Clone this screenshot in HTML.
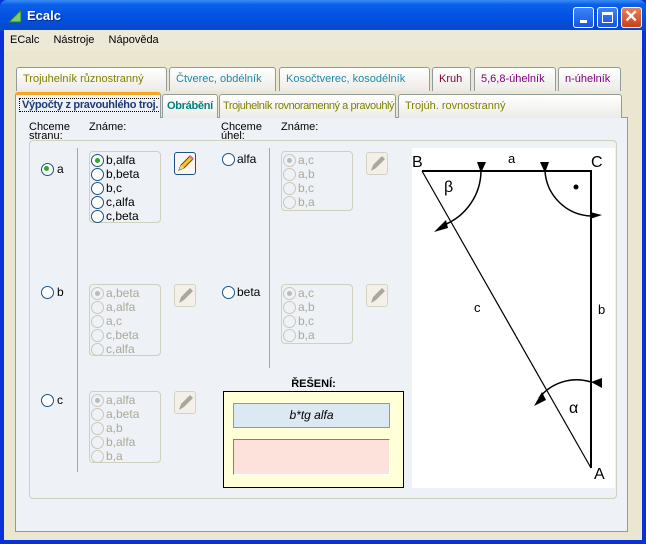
<!DOCTYPE html>
<html><head><meta charset="utf-8"><style>
*{box-sizing:border-box;margin:0;padding:0}
body{width:646px;height:544px;overflow:hidden;background:#0831d9;font-family:"Liberation Sans",sans-serif;font-size:11px;position:relative}
.abs{position:absolute}
#title{left:0;top:0;width:646px;height:31px;background:linear-gradient(#3a8cf5 0%,#0a5fe8 15%,#0050e0 60%,#0648c8 100%);border-radius:7px 7px 0 0}
#frame{left:4px;top:30px;width:638px;height:510px;background:#ece9d8}
#body{left:4px;top:50px;width:638px;height:490px;background:#ebe6d0}
.tb{top:7px;width:21px;height:21px;border:1px solid #fff;border-radius:3px;background:linear-gradient(#3c84f6,#1655e0)}
.tab{height:24px;border:1px solid #919b9c;border-bottom:none;border-radius:3px 3px 0 0;background:linear-gradient(#fff,#ecebe6);font-size:11px;line-height:22px;padding-left:6px;white-space:nowrap;overflow:hidden}
#panel{left:15px;top:117px;width:613px;height:415px;background:#eef2f6;border:1px solid #919b9c}
.gb{border:1px solid #d0d0bf;border-radius:4px}
.lb{border:1px solid #d0d0bf;border-radius:4px;background:transparent}
.opt{height:14px;line-height:14px;font-size:12px;padding-left:16px;position:relative}
.opt:before{content:"";position:absolute;left:1px;top:1px;width:11px;height:11px;border:1px solid #1c5180;border-radius:50%;background:#fff}
.dis{color:#aca899}.dis .opt:before{border-color:#cac8bb;background:transparent}
.sel:after{content:"";position:absolute;left:5px;top:5px;width:5px;height:5px;border-radius:50%;background:#2aaa2a}
.dis .sel:after{background:#bbb}
.rad{font-size:12px;padding-left:16px;position:absolute;height:14px;line-height:13px}
.rad:before{content:"";position:absolute;left:0;top:0;width:11px;height:11px;border:1px solid #1c5180;border-radius:50%;background:#fff}
.pb{width:22px;height:23px;border:1px solid #d6d2c2;border-radius:3px;background:#f2f0e8}
.lbl{font-size:11px;line-height:9px;color:#000}
</style></head><body>
<div id="title" class="abs"></div>
<svg class="abs" style="left:8px;top:9px" width="14" height="14"><polygon points="1,13 13,1 13,13" fill="#7ccf6a" stroke="#2a7a2a"/></svg>
<div class="abs" style="left:27px;top:8px;color:#fff;font-weight:bold;font-size:13px;text-shadow:1px 1px #0a2a8a">Ecalc</div>
<div class="abs tb" style="left:573px"><div class="abs" style="left:6px;top:12px;width:7px;height:3px;background:#fff"></div></div>
<div class="abs tb" style="left:597px"><div class="abs" style="left:4px;top:4px;width:11px;height:11px;border:1px solid #fff;border-top-width:3px"></div></div>
<div class="abs tb" style="left:621px;background:linear-gradient(#e8805a,#c8401a)"><div class="abs" style="left:2px;top:-1px;color:#fff;font-size:17px;font-weight:bold">✕</div></div>
<div id="frame" class="abs"></div>
<div class="abs" style="left:4px;top:30px;width:638px;height:20px;background:#ece9d8;font-size:11px;line-height:20px;padding-left:6px;word-spacing:4px">ECalc &nbsp;Nástroje &nbsp;Nápověda</div>
<div id="body" class="abs"></div>
<div id="panel" class="abs"></div>
<div class="abs tab" style="left:16px;top:67px;width:151px;color:#808000">Trojuhelník různostranný</div>
<div class="abs tab" style="left:169px;top:67px;width:107px;color:#1f8aa8">Čtverec, obdélník</div>
<div class="abs tab" style="left:279px;top:67px;width:151px;color:#1f8aa8">Kosočtverec, kosodélník</div>
<div class="abs tab" style="left:432px;top:67px;width:39px;color:#800040">Kruh</div>
<div class="abs tab" style="left:474px;top:67px;width:82px;color:#800080">5,6,8-úhelník</div>
<div class="abs tab" style="left:558px;top:67px;width:63px;color:#800080">n-úhelník</div>
<div class="abs tab" style="left:15px;top:92px;width:146px;height:26px;border-top:3px solid #f5a623;color:#1c3a78;font-weight:bold;padding-left:3px;line-height:20px;background:#eef2f6;letter-spacing:-0.3px"><span style="border:1px dotted #000;padding:0 2px">Výpočty z pravouhlého troj.</span></div>
<div class="abs tab" style="left:162px;top:94px;width:56px;color:#008080;font-weight:bold;letter-spacing:-0.3px;padding-left:4px">Obrábění</div>
<div class="abs tab" style="left:219px;top:94px;width:177px;color:#808000;letter-spacing:-0.45px;padding-left:3px">Trojuhelník rovnoramenný a pravouhlý</div>
<div class="abs tab" style="left:398px;top:94px;width:224px;color:#808000">Trojúh. rovnostranný</div>

<div class="abs lbl" style="left:29px;top:123px">Chceme<br>stranu:</div>
<div class="abs lbl" style="left:89px;top:123px">Známe:</div>
<div class="abs lbl" style="left:221px;top:123px">Chceme<br>úhel:</div>
<div class="abs lbl" style="left:281px;top:123px">Známe:</div>
<div class="abs gb" style="left:29px;top:140px;width:588px;height:359px"></div>
<div class="abs" style="left:77px;top:148px;width:1px;height:324px;background:#aca899"></div>
<div class="abs" style="left:269px;top:148px;width:1px;height:220px;background:#aca899"></div>

<div class="rad" style="left:41px;top:163px;">a</div>
<div class="rad" style="left:41px;top:286px;">b</div>
<div class="rad" style="left:41px;top:394px;">c</div>
<div class="rad" style="left:222px;top:153px;padding-left:15px">alfa</div>
<div class="rad" style="left:222px;top:286px;padding-left:15px">beta</div>
<div class="abs" style="left:44px;top:166px;width:5px;height:5px;border-radius:50%;background:#2aaa2a"></div>

<div class="abs lb" style="left:89px;top:151px;width:72px;height:72px;padding-top:1px">
<div class="opt sel">b,alfa</div><div class="opt">b,beta</div><div class="opt">b,c</div><div class="opt">c,alfa</div><div class="opt">c,beta</div></div>
<div class="abs lb dis" style="left:89px;top:284px;width:72px;height:72px;padding-top:1px">
<div class="opt sel">a,beta</div><div class="opt">a,alfa</div><div class="opt">a,c</div><div class="opt">c,beta</div><div class="opt">c,alfa</div></div>
<div class="abs lb dis" style="left:89px;top:391px;width:72px;height:72px;padding-top:1px">
<div class="opt sel">a,alfa</div><div class="opt">a,beta</div><div class="opt">a,b</div><div class="opt">b,alfa</div><div class="opt">b,a</div></div>
<div class="abs lb dis" style="left:281px;top:151px;width:72px;height:60px;padding-top:1px">
<div class="opt sel">a,c</div><div class="opt">a,b</div><div class="opt">b,c</div><div class="opt">b,a</div></div>
<div class="abs lb dis" style="left:281px;top:284px;width:72px;height:60px;padding-top:1px">
<div class="opt sel">a,c</div><div class="opt">a,b</div><div class="opt">b,c</div><div class="opt">b,a</div></div>

<div class="abs pb" style="left:174px;top:152px;border:1px solid #1c5180;background:#f7f6f0"><svg width="20" height="21"><path d="M4 17 L6 12 L15 3 L18 6 L9 15 Z" fill="#f5c030" stroke="#6a4a00"/><path d="M4 17 L6 12 L9 15 Z" fill="#f0d8a8"/><path d="M15 3 L18 6" stroke="#e07090" stroke-width="2"/></svg></div>
<div class="abs pb" style="left:174px;top:284px"><svg width="20" height="21"><path d="M4 18 L6 12 L15 3 L18 6 L9 15 Z" fill="#aca899"/></svg></div>
<div class="abs pb" style="left:174px;top:391px"><svg width="20" height="21"><path d="M4 18 L6 12 L15 3 L18 6 L9 15 Z" fill="#aca899"/></svg></div>
<div class="abs pb" style="left:366px;top:152px"><svg width="20" height="21"><path d="M4 18 L6 12 L15 3 L18 6 L9 15 Z" fill="#aca899"/></svg></div>
<div class="abs pb" style="left:366px;top:284px"><svg width="20" height="21"><path d="M4 18 L6 12 L15 3 L18 6 L9 15 Z" fill="#aca899"/></svg></div>

<div class="abs" style="left:223px;top:378px;width:181px;text-align:center;font-weight:bold;font-size:11px">ŘEŠENÍ:</div>
<div class="abs" style="left:223px;top:391px;width:181px;height:97px;background:#ffffd8;border:1px solid #000"></div>
<div class="abs" style="left:233px;top:403px;width:157px;height:25px;background:#dde9f2;border:1px solid #7f9db9;text-align:center;font-style:italic;font-size:12px;line-height:22px">b*tg alfa</div>
<div class="abs" style="left:233px;top:439px;width:157px;height:36px;background:#fde2dc;border:1px solid #808080;border-right-color:#fff;border-bottom-color:#fff"></div>

<svg class="abs" style="left:412px;top:148px" width="203" height="340">
<rect width="203" height="340" fill="#fff"/>
<g stroke="#000" fill="none">
<path d="M10 23 L179 23 L179 320" stroke-width="2"/>
<path d="M10 23 L179 320" stroke-width="1.2"/>
<path d="M69 23 A59 59 0 0 1 32 77" stroke-width="1.5"/>
<path d="M133 23 A48 48 0 0 0 179 68" stroke-width="1.5"/>
<path d="M179 234 A48 48 0 0 0 127 250" stroke-width="1.5"/>
</g>
<g fill="#000">
<polygon points="65,14 74,14 69,25"/>
<polygon points="128,14 137,14 133,25"/>
<polygon points="22,84 34,72 36,80"/>
<polygon points="178,64 190,67 178,71"/>
<polygon points="190,230 190,240 179,234"/>
<polygon points="122,258 130,244 134,252"/>
<circle cx="164" cy="39" r="2.5"/>
</g>
<g font-family="Liberation Sans,sans-serif">
<text x="0" y="19" font-size="16">B</text>
<text x="179" y="19" font-size="16">C</text>
<text x="182" y="331" font-size="16">A</text>
<text x="96" y="15" font-size="13">a</text>
<text x="186" y="166" font-size="13">b</text>
<text x="62" y="164" font-size="13">c</text>
<text x="32" y="44" font-size="16">β</text>
<text x="157" y="265" font-size="16">α</text>
</g></svg>
</body></html>
